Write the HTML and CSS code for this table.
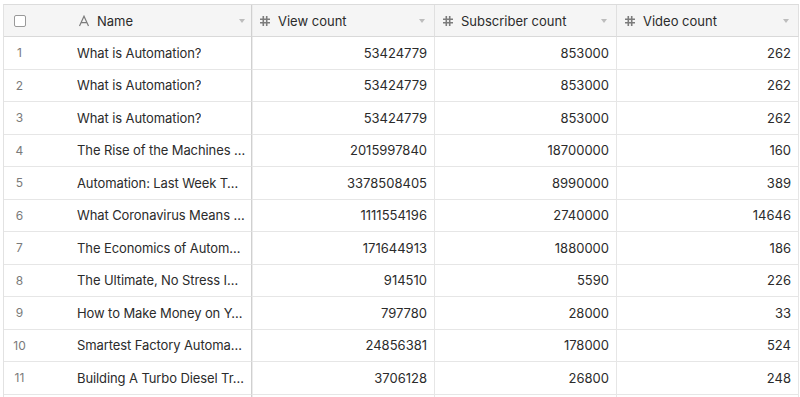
FILE: index.html
```html
<!DOCTYPE html>
<html lang="en">
<head>
    <meta charset="UTF-8">
    <title>Videos - Grid view</title>
    <link rel="stylesheet" href="styles.css">
</head>
<body>
    <div class="grid">
        <!-- header -->
        <div class="row header">
            <div class="cell num"><span class="checkbox"></span></div>
            <div class="cell name">
                <svg class="field-icon" viewBox="0 0 12 12"><path d="M1.5 11 L6 1.2 L10.5 11 M3.2 7.6 H8.8" /></svg>
                <span class="label">Name</span>
                <span class="caret"></span>
            </div>
            <div class="cell col">
                <svg class="field-icon" viewBox="0 0 12 12"><path d="M4.3 1 V11 M7.7 1 V11 M1 4.3 H11 M1 7.7 H11" /></svg>
                <span class="label">View count</span>
                <span class="caret"></span>
            </div>
            <div class="cell col">
                <svg class="field-icon" viewBox="0 0 12 12"><path d="M4.3 1 V11 M7.7 1 V11 M1 4.3 H11 M1 7.7 H11" /></svg>
                <span class="label">Subscriber count</span>
                <span class="caret"></span>
            </div>
            <div class="cell col">
                <svg class="field-icon" viewBox="0 0 12 12"><path d="M4.3 1 V11 M7.7 1 V11 M1 4.3 H11 M1 7.7 H11" /></svg>
                <span class="label">Video count</span>
                <span class="caret"></span>
            </div>
        </div>

        <div class="row"><div class="cell num"><span>1</span></div><div class="cell name"><span class="text">What is Automation?</span></div><div class="cell val">53424779</div><div class="cell val">853000</div><div class="cell val">262</div></div>
        <div class="row"><div class="cell num"><span>2</span></div><div class="cell name"><span class="text">What is Automation?</span></div><div class="cell val">53424779</div><div class="cell val">853000</div><div class="cell val">262</div></div>
        <div class="row"><div class="cell num"><span>3</span></div><div class="cell name"><span class="text">What is Automation?</span></div><div class="cell val">53424779</div><div class="cell val">853000</div><div class="cell val">262</div></div>
        <div class="row"><div class="cell num"><span>4</span></div><div class="cell name"><span class="text">The Rise of the Machines …</span></div><div class="cell val">2015997840</div><div class="cell val">18700000</div><div class="cell val">160</div></div>
        <div class="row"><div class="cell num"><span>5</span></div><div class="cell name"><span class="text">Automation: Last Week T…</span></div><div class="cell val">3378508405</div><div class="cell val">8990000</div><div class="cell val">389</div></div>
        <div class="row"><div class="cell num"><span>6</span></div><div class="cell name"><span class="text">What Coronavirus Means …</span></div><div class="cell val">1111554196</div><div class="cell val">2740000</div><div class="cell val">14646</div></div>
        <div class="row"><div class="cell num"><span>7</span></div><div class="cell name"><span class="text">The Economics of Autom…</span></div><div class="cell val">171644913</div><div class="cell val">1880000</div><div class="cell val">186</div></div>
        <div class="row"><div class="cell num"><span>8</span></div><div class="cell name"><span class="text">The Ultimate, No Stress I…</span></div><div class="cell val">914510</div><div class="cell val">5590</div><div class="cell val">226</div></div>
        <div class="row"><div class="cell num"><span>9</span></div><div class="cell name"><span class="text">How to Make Money on Y…</span></div><div class="cell val">797780</div><div class="cell val">28000</div><div class="cell val">33</div></div>
        <div class="row"><div class="cell num"><span>10</span></div><div class="cell name"><span class="text">Smartest Factory Automa…</span></div><div class="cell val">24856381</div><div class="cell val">178000</div><div class="cell val">524</div></div>
        <div class="row"><div class="cell num"><span>11</span></div><div class="cell name"><span class="text">Building A Turbo Diesel Tr…</span></div><div class="cell val">3706128</div><div class="cell val">26800</div><div class="cell val">248</div></div>
        <div class="row last"><div class="cell num"></div><div class="cell name"></div><div class="cell val"></div><div class="cell val"></div><div class="cell val"></div></div>
    </div>
</body>
</html>
```

FILE: styles.css
```css
* {
    box-sizing: border-box;
    margin: 0;
    padding: 0;
}

body {
    font-family: 'Inter', 'Liberation Sans', sans-serif;
    font-size: 13px;
    color: #2b2b2b;
    background: #fff;
    overflow: hidden;
    height: 397px;
}

.grid {
    margin: 4px 0 0 3px;
    width: 796px;
    height: 393px;
    overflow: hidden;
    border-left: 1px solid #e2e2e2;
    border-top: 1px solid #dcdcdc;
}

.row {
    display: grid;
    grid-template-columns: 63px 185px 183px 182px 182px;
    height: 32.5px;
}

.cell {
    display: flex;
    align-items: center;
    border-bottom: 1px solid #e6e6e6;
    border-right: 1px solid #e6e6e6;
    padding: 0 7px;
    min-width: 0;
    white-space: nowrap;
}

.header {
    height: 32px;
    background: #f5f5f5;
}

.header .cell {
    border-bottom-color: #d9d9d9;
    border-right-color: #e0e0e0;
}

/* row number / checkbox column */
.cell.num {
    border-right: none;
    padding: 0;
    color: #7a7a7a;
    font-size: 12px;
}

.cell.num span {
    width: 31px;
    text-align: center;
}

.checkbox {
    display: block;
    width: 12px !important;
    height: 12px;
    margin-left: 10px;
    border: 1px solid #999;
    border-radius: 2px;
    background: #fff;
}

.cell.name {
    padding: 0 1px 0 10px;
    border-right: 1px solid #d0d0d0;
    box-shadow: 1px 0 0 #ececec;
}

.header .cell.name {
    padding-left: 11px;
    padding-right: 4px;
}

.cell.name .text {
    overflow: hidden;
    text-overflow: ellipsis;
    letter-spacing: -0.1px;
}

.cell.val {
    justify-content: flex-end;
}

.field-icon {
    width: 12px;
    height: 12px;
    flex: none;
    fill: none;
    stroke: #7c7c7c;
    stroke-width: 1.6;
}

.name .field-icon {
    stroke-width: 1.2;
}

.label {
    margin-left: 7px;
    flex: 1;
    color: #2b2b2b;
}

.caret {
    width: 0;
    height: 0;
    border-left: 3.5px solid transparent;
    border-right: 3.5px solid transparent;
    border-top: 4px solid #bdbdbd;
    margin-right: 2px;
}
```
